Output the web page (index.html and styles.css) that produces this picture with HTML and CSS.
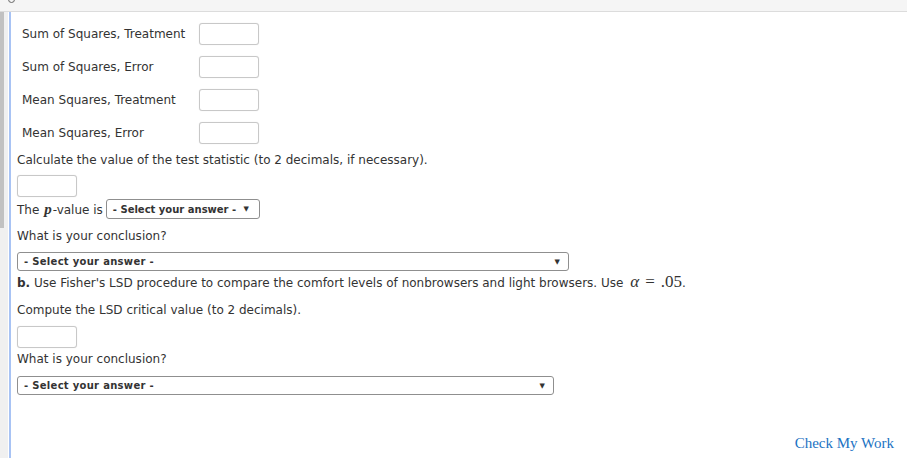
FILE: index.html
```html
<!DOCTYPE html>
<html>
<head>
<meta charset="utf-8">
<link rel="stylesheet" href="styles.css">
</head>
<body>
<div class="topbar"><span class="topglyph"></span></div>
<div class="main">
  <div class="gutter"><div class="thumb"></div></div>
  <div class="content">
    <div class="grid">
      <div class="lbl">Sum of Squares, Treatment</div><div class="inp"></div>
      <div class="lbl">Sum of Squares, Error</div><div class="inp"></div>
      <div class="lbl">Mean Squares, Treatment</div><div class="inp"></div>
      <div class="lbl">Mean Squares, Error</div><div class="inp"></div>
    </div>
    <p class="txt t-calc">Calculate the value of the test statistic (to 2 decimals, if necessary).</p>
    <div class="inp inp-calc"></div>
    <div class="prow">
      <span class="txt">The <span class="mathp">p</span>-value is</span>
      <div class="sel sel-small"><span>- Select your answer -</span><span class="arrow">▼</span></div>
    </div>
    <p class="txt t-what1">What is your conclusion?</p>
    <div class="sel sel-wide1"><span>- Select your answer -</span><span class="arrow">▼</span></div>
    <p class="txt t-b"><b>b.</b> Use Fisher's LSD procedure to compare the comfort levels of nonbrowsers and light browsers. Use <span class="math"><i>α</i><span class="eq">=</span>.05</span>.</p>
    <p class="txt t-comp">Compute the LSD critical value (to 2 decimals).</p>
    <div class="inp inp-lsd"></div>
    <p class="txt t-what2">What is your conclusion?</p>
    <div class="sel sel-wide2"><span>- Select your answer -</span><span class="arrow">▼</span></div>
    <div class="footer"><a class="check">Check My Work</a></div>
  </div>
</div>
</body>
</html>
```
FILE: styles.css
```css
html, body { margin: 0; padding: 0; background: #fff; }
body { font-family: "DejaVu Sans", Verdana, sans-serif; color: #333; width: 907px; height: 458px; overflow: hidden; }
.topbar { height: 11px; background: #f5f5f5; border-bottom: 1px solid #dcdcdc; position: relative; }
.topglyph { position: absolute; left: 8px; top: -4px; width: 5px; height: 5px; border: 1px solid #666; border-radius: 50%; }
.main { display: flex; height: 446px; }
.gutter { width: 8px; background: #f0f0f0; border-right: 1px solid #fff; }
.thumb { width: 4px; height: 216px; background: #c1c1c1; }
.content { flex: 1; border-left: 2px solid #a8c3f4; padding: 0 0 0 6px; position: relative; }
.grid { display: grid; grid-template-columns: 177px 60px; row-gap: 11px; padding: 11px 0 0 5px; align-items: center; }
.lbl { font-size: 12px; line-height: 16px; }
.inp { width: 60px; height: 22px; box-sizing: border-box; border: 1px solid #c8c8c8; border-radius: 3px; background: #fff; box-shadow: 0 0 1px rgba(0,0,0,0.15); }
.txt { font-size: 12px; line-height: 16px; margin: 0; }
.t-calc { margin-top: 8px; }
.inp-calc { margin-top: 7px; }
.prow { display: flex; align-items: center; gap: 3px; margin-top: 2px; }
.mathp { font-family: "Liberation Serif", "DejaVu Serif", serif; font-style: italic; font-weight: bold; font-size: 15px; margin: 0 1px; }
.sel { display: flex; justify-content: space-between; align-items: center; box-sizing: border-box; height: 20px; border: 1px solid #8f8f8f; border-radius: 3px; background: #fff; font-size: 10px; letter-spacing: 0.3px; font-weight: bold; padding: 0 8px 0 6px; color: #333; white-space: nowrap; }
.sel-small { width: 154px; padding: 0 10px 0 6px; letter-spacing: 0; }
.arrow { font-size: 7px; color: #333; letter-spacing: 0; flex: none; }
.t-what1 { margin-top: 9px; }
.sel-wide1 { width: 552px; margin-top: 8px; height: 19px; }
.t-b { margin-top: 3px; }
.math { font-family: "Liberation Serif", "DejaVu Serif", serif; font-size: 17px; margin-left: 3px; }
.eq { margin: 0 6px; }
.t-comp { margin-top: 11px; }
.inp-lsd { margin-top: 8px; }
.t-what2 { margin-top: 3px; }
.sel-wide2 { width: 537px; margin-top: 9px; height: 19px; }
.footer { display: flex; justify-content: flex-end; padding: 40px 13px 0 0; }
.check { font-family: "Liberation Serif", "DejaVu Serif", serif; font-size: 15px; color: #1b73c3; }
```
